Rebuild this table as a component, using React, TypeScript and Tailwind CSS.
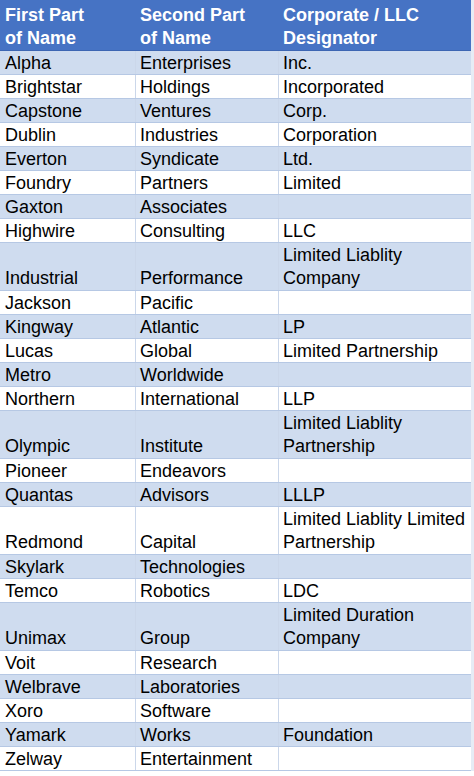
const rows: [string, string, string, boolean][] = [
  ["Alpha", "Enterprises", "Inc.", false],
  ["Brightstar", "Holdings", "Incorporated", false],
  ["Capstone", "Ventures", "Corp.", false],
  ["Dublin", "Industries", "Corporation", false],
  ["Everton", "Syndicate", "Ltd.", false],
  ["Foundry", "Partners", "Limited", false],
  ["Gaxton", "Associates", "", false],
  ["Highwire", "Consulting", "LLC", false],
  ["Industrial", "Performance", "Limited Liablity Company", true],
  ["Jackson", "Pacific", "", false],
  ["Kingway", "Atlantic", "LP", false],
  ["Lucas", "Global", "Limited Partnership", false],
  ["Metro", "Worldwide", "", false],
  ["Northern", "International", "LLP", false],
  ["Olympic", "Institute", "Limited Liablity Partnership", true],
  ["Pioneer", "Endeavors", "", false],
  ["Quantas", "Advisors", "LLLP", false],
  ["Redmond", "Capital", "Limited Liablity Limited Partnership", true],
  ["Skylark", "Technologies", "", false],
  ["Temco", "Robotics", "LDC", false],
  ["Unimax", "Group", "Limited Duration Company", true],
  ["Voit", "Research", "", false],
  ["Welbrave", "Laboratories", "", false],
  ["Xoro", "Software", "", false],
  ["Yamark", "Works", "Foundation", false],
  ["Zelway", "Entertainment", "", false],
];

export default function App() {
  return (
    <main className="w-[474px] min-h-screen bg-white font-['Liberation_Sans',Arial,sans-serif] text-[18px] text-black">
      <div className="w-[471px] border-r-[3px] border-[#e6ecf5] box-content">
        <div className="grid grid-cols-[136px_143px_1fr] h-[51px] bg-[#4673c4] text-white font-bold leading-[23px] pt-[4px] border-b border-[#3d66b3]">
          <div className="pl-[5px]">First Part<br />of Name</div>
          <div className="pl-[4px]">Second Part<br />of Name</div>
          <div className="pl-[4px]">Corporate / LLC<br />Designator</div>
        </div>
        {rows.map(([a, b, c, tall], i) => {
          const band = i % 2 === 0;
          return (
            <div
              key={a}
              className={
                "grid grid-cols-[136px_143px_1fr] border-b border-[#b6c8e4] " +
                (tall ? "h-[48px] leading-[23px] " : "h-[24px] leading-[21px] ") +
                (band ? "bg-[#cfdcef]" : "bg-white")
              }
            >
              <div className="flex items-end pl-[5px] border-r border-[#cbd7ea]">{a}</div>
              <div className="flex items-end pl-[4px] border-r border-[#cbd7ea]">{b}</div>
              <div className="flex items-end pl-[4px] pr-1">{c}</div>
            </div>
          );
        })}
      </div>
    </main>
  );
}
